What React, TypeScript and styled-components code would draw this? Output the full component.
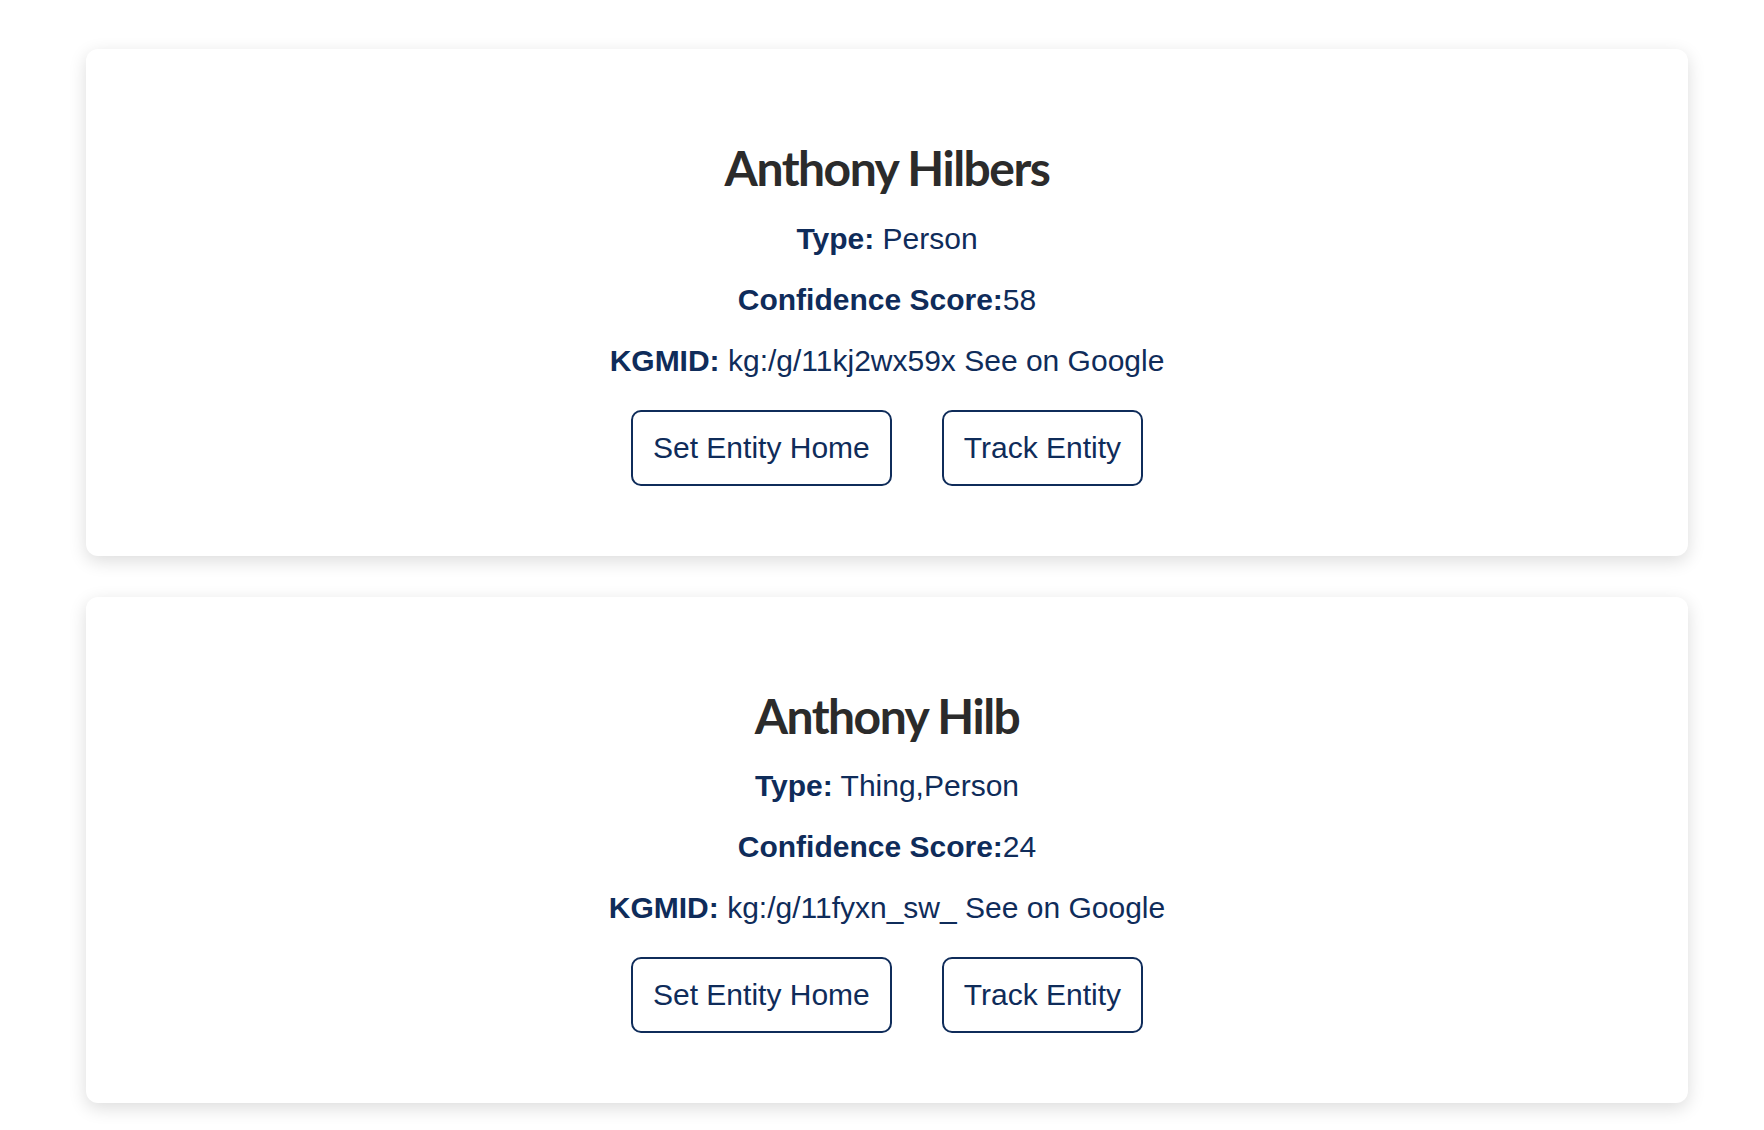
import * as React from "react";
import styled, { createGlobalStyle } from "styled-components";

const GlobalStyles = createGlobalStyle`
  html, body, #root {
    width: 100%;
    min-height: 100%;
  }
  *, *:before, *:after {
    box-sizing: border-box;
    margin: 0;
    padding: 0;
  }
  body {
    background: #fff;
    color: #0f2c5a;
    font-family: "Liberation Sans", Arial, sans-serif;
  }
`;

const Page = styled.main`
  display: flex;
  flex-direction: column;
  gap: 41px;
  padding: 49px 76px 30px 86px;
`;

const Card = styled.article`
  display: flex;
  flex-direction: column;
  align-items: center;
  background: #fff;
  border-radius: 12px;
  box-shadow: 0 5px 18px rgba(0, 0, 0, 0.14);
  padding: 90px 20px 70px;
`;

const Name = styled.h2`
  font-family: Lato, "Noto Sans", sans-serif;
  font-weight: 700;
  font-size: 48px;
  line-height: 57.6px;
  letter-spacing: -1.5px;
  color: #2b2b2b;
  margin-bottom: 25px;
`;

const Field = styled.p`
  font-size: 30px;
  line-height: 34px;
  color: #0f2c5a;
  & + & {
    margin-top: 27px;
  }
  b {
    font-weight: 700;
  }
`;

const Actions = styled.div`
  display: flex;
  gap: 50px;
  margin-top: 32px;
`;

const ActionButton = styled.button`
  font-family: "Liberation Sans", Arial, sans-serif;
  font-size: 30px;
  line-height: 34px;
  color: #0f2c5a;
  background: #fff;
  border: 2px solid #0f2c5a;
  border-radius: 10px;
  padding: 19px 20px;
  cursor: pointer;
`;

const entities = [
  { name: "Anthony Hilbers", type: "Person", score: 58, kgmid: "kg:/g/11kj2wx59x" },
  { name: "Anthony Hilb", type: "Thing,Person", score: 24, kgmid: "kg:/g/11fyxn_sw_" },
];

const App = () => {
  return (
    <>
      <GlobalStyles />
      <Page>
        {entities.map(({ name, type, score, kgmid }) => (
          <Card key={kgmid}>
            <Name>{name}</Name>
            <Field>
              <b>Type:</b> {type}
            </Field>
            <Field>
              <b>Confidence Score:</b>
              {score}
            </Field>
            <Field>
              <b>KGMID:</b> {kgmid} See on Google
            </Field>
            <Actions>
              <ActionButton>Set Entity Home</ActionButton>
              <ActionButton>Track Entity</ActionButton>
            </Actions>
          </Card>
        ))}
      </Page>
    </>
  );
};

export default App;
